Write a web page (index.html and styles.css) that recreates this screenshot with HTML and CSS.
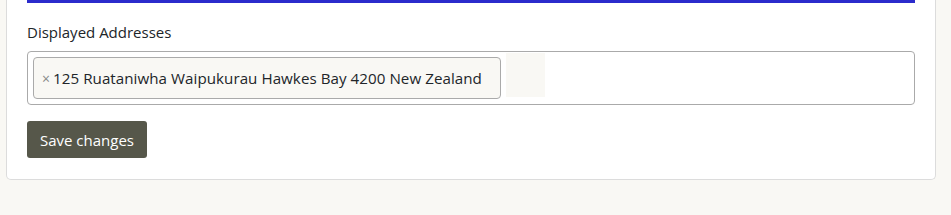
FILE: index.html
```html
<!DOCTYPE html>
<html>
<head>
<meta charset="utf-8">
<link rel="stylesheet" href="styles.css">
</head>
<body>
<div class="page">
  <div class="card">
    <div class="accent"></div>
    <div class="field">
      <label class="label">Displayed Addresses</label>
      <div class="select">
        <span class="tag"><span class="tag-x">×</span>125 Ruataniwha Waipukurau Hawkes Bay 4200 New Zealand</span>
        <span class="search"></span>
      </div>
    </div>
    <button class="btn">Save changes</button>
  </div>
</div>
</body>
</html>
```
FILE: styles.css
```css
html, body {
  margin: 0;
  padding: 0;
  background: #f9f8f4;
  font-family: "Open Sans", "Noto Sans", sans-serif;
  color: #212529;
}
.page {
  padding: 0 15px 0 6px;
}
.card {
  background: #fff;
  border: 1px solid #dcdcdc;
  border-top: none;
  border-radius: 0 0 5px 5px;
  padding: 0 20px 21px 20px;
}
.accent {
  height: 3px;
  background: #2b2bcc;
}
.field {
  padding-top: 19px;
}
.label {
  display: block;
  font-size: 15px;
  line-height: 20px;
  margin-bottom: 9px;
}
.select {
  border: 1px solid #aaa;
  border-radius: 4px;
  height: 54px;
  box-sizing: border-box;
  display: flex;
  align-items: flex-start;
  padding: 5px;
  gap: 5px;
}
.tag {
  display: flex;
  align-items: center;
  height: 42px;
  box-sizing: border-box;
  border: 1px solid #aaa;
  border-radius: 4px;
  background: #f9f8f4;
  padding: 0 18px 0 8px;
  font-size: 15.15px;
  letter-spacing: 0.05px;
  white-space: nowrap;
}
.tag-x {
  color: #888;
  margin-right: 3px;
  font-size: 14px;
}
.search {
  width: 39px;
  height: 44px;
  margin-top: -4px;
  background: #f9f8f4;
}
.btn {
  margin-top: 16px;
  background: #56574a;
  color: #fff;
  border: none;
  border-radius: 3px;
  height: 37px;
  padding: 0 13px;
  font-family: inherit;
  font-size: 15px;
}
```
